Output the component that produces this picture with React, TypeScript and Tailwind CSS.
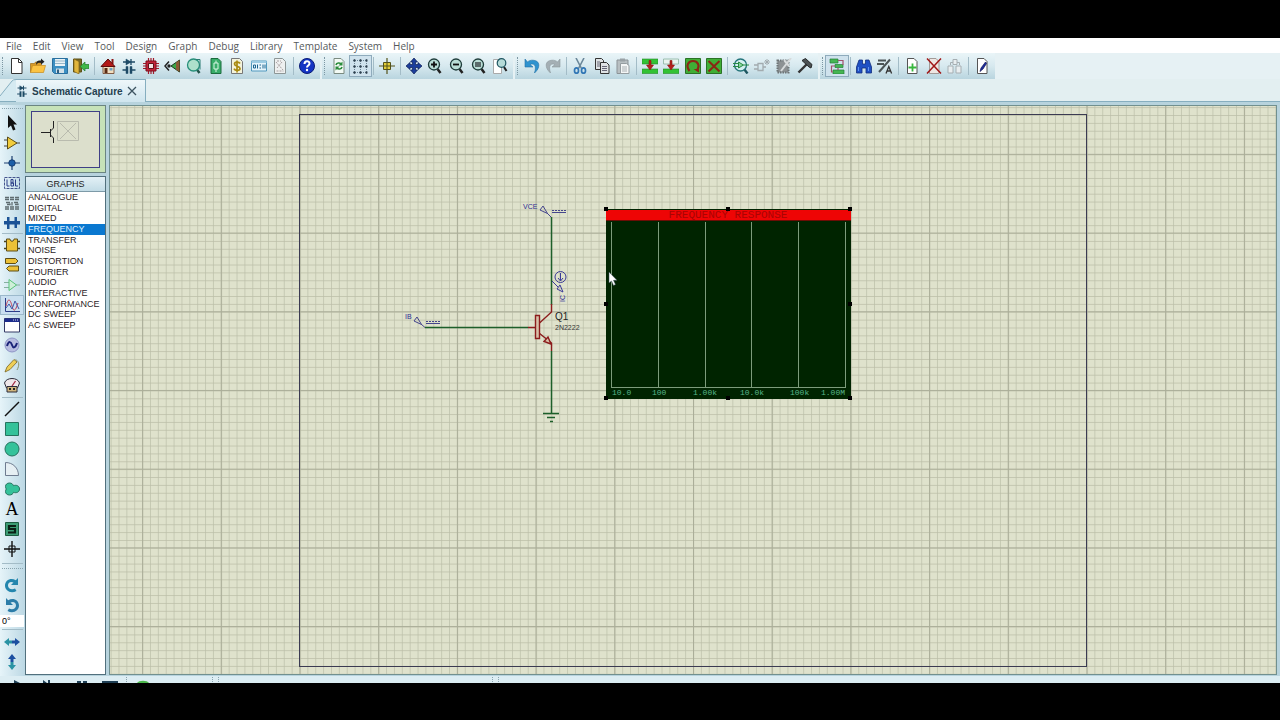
import { useState } from "react";
import type { ReactNode } from "react";

const MENUS = [
  "File",
  "Edit",
  "View",
  "Tool",
  "Design",
  "Graph",
  "Debug",
  "Library",
  "Template",
  "System",
  "Help",
];

const GRAPHS = [
  "ANALOGUE",
  "DIGITAL",
  "MIXED",
  "FREQUENCY",
  "TRANSFER",
  "NOISE",
  "DISTORTION",
  "FOURIER",
  "AUDIO",
  "INTERACTIVE",
  "CONFORMANCE",
  "DC SWEEP",
  "AC SWEEP",
];

const AXIS = [
  { x: 306, label: "10.0" },
  { x: 346, label: "100" },
  { x: 387, label: "1.00k" },
  { x: 434, label: "10.0k" },
  { x: 484, label: "100k" },
  { x: 515, label: "1.00M" },
];

const page = <path d="M3.500 .5h6.500l3 3v12h-9.500z" fill="#fff" stroke="#555" />;
const lens = (
  <>
    <path d="M10.500 11l3 4" stroke="#222" strokeWidth="2.500" />
    <circle cx="7" cy="6.500" r="5.500" fill="#b9ded6" stroke="#1e3c3a" strokeWidth="1.300" />
  </>
);

const ICONS: Record<string, ReactNode> = {
  New: (
    <>
      <path d="M2.500 .5h7l3.500 3.500v11.500H2.500z" fill="#fff" stroke="#333" />
      <path d="M9.500 .5v4H13" fill="none" stroke="#333" />
    </>
  ),
  Open: (
    <>
      <path d="M.5 14.500V5.500h4l1-1.500h6v3" fill="#d89a28" stroke="#a06d18" strokeWidth=".7" />
      <path d="M.5 14.500l2-7h13l-2 7z" fill="#fbc343" stroke="#c58b1c" strokeWidth=".7" />
      <path d="M6 7c0-4 2-5 5-4.500V.5l3.500 3.200-3.500 2.800V5c-2-.5-3.500-.2-5 2z" fill="#222" />
    </>
  ),
  Save: (
    <>
      <path d="M.5 .5h15v15h-13l-2-2z" fill="#3b8fc2" stroke="#2a6f9e" />
      <path d="M3 1h10v7H3z" fill="#e8f2f6" />
      <path d="M3 3h10M3 5.500h10" stroke="#96b6c8" />
      <path d="M4 10.500h8V15H4z" fill="#d2e1e8" />
      <path d="M5 11.500h2V15H5z" fill="#315e80" />
    </>
  ),
  Exit: (
    <>
      <path d="M.5 1h8v13h-8z" fill="#7c6a22" stroke="#5d5019" />
      <path d="M1 1l5 2.500V16l-5-2.500z" fill="#e1b63c" stroke="#7c621a" strokeWidth=".7" />
      <path d="M16 6.500v4h-4V13L7 8.500 12 4v2.500z" fill="#3fb84a" stroke="#207a2b" strokeWidth=".7" />
    </>
  ),
  Home: (
    <>
      <path d="M11.500 1h2v5h-2z" fill="#8c1515" />
      <path d="M3 8h11v7.500H3z" fill="#f3dfc0" stroke="#6a3b22" strokeWidth=".8" />
      <path d="M8 1L1 8.500h14z" fill="#b31919" stroke="#5c0d0d" />
      <path d="M4.500 10h3v5h-3z" fill="#5b2c14" />
      <path d="M9.500 10h3v2.500h-3z" fill="#6aa0c0" />
    </>
  ),
  Schematic: (
    <g stroke="#1e4a66" fill="#1e4a66">
      <path d="M2 4h12M10 1v6M1.500 12H6M10 12h4.500" strokeWidth="1.300" />
      <path d="M5 1l5 3-5 3z" strokeWidth=".5" />
      <path d="M5 8.500v7h2v-7zM9 8.500v7h2v-7z" strokeWidth=".5" />
    </g>
  ),
  "PCB Layout": (
    <>
      <path d="M5.500 0v16M8 0v16M10.500 0v16M0 5.500h16M0 8h16M0 10.500h16" stroke="#a01c2c" strokeWidth="1.200" />
      <path d="M3 3h10v10H3z" fill="#c5233a" stroke="#7d0e1d" />
      <path d="M5.500 5.500h5v5h-5z" fill="#f2e3e4" stroke="#601018" />
    </>
  ),
  "3D Viewer": (
    <>
      <path d="M15.500 2v12L7 8z" fill="#3aa648" stroke="#1c3a20" />
      <path d="M15.500 2v12L12 11.500v-7z" fill="#8b5a36" />
      <path d="M5 3.500L1 8l4 4.500" fill="none" stroke="#222" strokeWidth="1.500" />
      <circle cx="5" cy="8" r="1.700" fill="#222" />
    </>
  ),
  "Gerber Viewer": (
    <>
      <path d="M10.500 11l3 4" stroke="#24564c" strokeWidth="2.500" />
      <circle cx="7.500" cy="7" r="6" fill="#aee0cb" stroke="#278f79" strokeWidth="1.300" />
      <path d="M10 1.500h4v10" fill="none" stroke="#2b7c72" />
    </>
  ),
  "Design Explorer": (
    <>
      <path d="M3 .5h7l3 3v12H3z" fill="#38ad69" stroke="#1b6b3d" />
      <path d="M6 5h4v6H6zM8 2.500V5m0 6v3" fill="none" stroke="#d8f6e4" />
    </>
  ),
  "Bill of Materials": (
    <>
      <path d="M2.500 .5h8l3 3v12h-11z" fill="#f3f3dc" stroke="#777" />
      <path d="M11 5.500C10 3.500 5.500 3.500 5.500 6S11 8 11 10.500s-5 2.500-6 .2M8 2.500v12" fill="none" stroke="#a98a10" strokeWidth="1.700" />
    </>
  ),
  "Source Code": (
    <>
      <path d="M.5 3h15v10H.5z" fill="#e5f4fb" stroke="#5098bd" />
      <path d="M.5 3h15v2H.5z" fill="#9ccbe2" />
      <path d="M2.500 7h2v3h-2zM6.500 6.500v4M8.500 7h1.500M8.500 10h1.500M12 6.500v4M14 6.500v4" fill="none" stroke="#1d658f" />
    </>
  ),
  Notes: (
    <>
      <path d="M2.500 .5h8l3 3v12h-11z" fill="#eef0f0" stroke="#8d9696" />
      <path d="M4 4l7 8M10 4l-5 6M4.500 13h7M5 3h4" stroke="#a9a0a2" strokeDasharray="2 1" />
    </>
  ),
  Help: (
    <>
      <circle cx="8" cy="8" r="7.500" fill="#1434c4" stroke="#0b1c75" />
      <path d="M5.500 6c0-3.500 5-3.500 5-.5 0 2-2.500 2-2.500 4" fill="none" stroke="#fff" strokeWidth="2" />
      <circle cx="8" cy="12" r="1.200" fill="#fff" />
    </>
  ),
  Redraw: (
    <>
      <path d="M3 .5h7l3 3v12H3z" fill="#f3faf5" stroke="#7a8a80" />
      <path d="M5 7c.5-2.500 4-2.500 5-1M11 9c-.5 2.500-4 2.500-5 1" fill="none" stroke="#2a8c3c" strokeWidth="1.600" />
      <path d="M11.500 3.500v4h-4zM4.500 12.500v-4h4z" fill="#2a8c3c" />
    </>
  ),
  Grid: (
    <>
      <path d="M1 2.500h14M1 8.500h14M1 14.500h14M2.500 1v15M8.500 1v15M14.500 1v15" stroke="#6c8494" strokeDasharray="1 1" />
      <path
        d="M1.500 1.500h2v2h-2zM7.500 1.500h2v2h-2zM13.500 1.500h2v2h-2zM1.500 7.500h2v2h-2zM7.500 7.500h2v2h-2zM13.500 7.500h2v2h-2zM1.500 13.500h2v2h-2zM7.500 13.500h2v2h-2zM13.500 13.500h2v2h-2z"
        fill="#2e3f4c"
      />
    </>
  ),
  Origin: (
    <>
      <path d="M0 8h16M8 0v16" stroke="#54521a" strokeWidth="1.200" />
      <path d="M4.500 4.500h7v7h-7z" fill="#e4cf3a" stroke="#54521a" />
      <path d="M4.500 8h7M8 4.500v7" stroke="#54521a" />
    </>
  ),
  Pan: (
    <path
      d="M8 0l3.500 4H9.500v2.500H12V4.500L16 8l-4 3.500v-2H9.500V12h2L8 16l-3.500-4h2V9.500H4v2L0 8l4-3.500v2h2.500V4h-2z"
      fill="#1c3f9c"
      stroke="#0e2054"
      strokeWidth=".7"
    />
  ),
  "Zoom In": (
    <>
      {lens}
      <path d="M4 6.500h6M7 3.500v6" stroke="#111" strokeWidth="1.800" />
    </>
  ),
  "Zoom Out": (
    <>
      {lens}
      <path d="M4 6.500h6" stroke="#111" strokeWidth="1.800" />
    </>
  ),
  "Zoom All": (
    <>
      {lens}
      <path d="M4 4h6v5H4z" fill="#5b6b6b" />
    </>
  ),
  "Zoom Area": (
    <>
      <path d="M1.500 1.500h8v14h-8z" fill="#fff" stroke="#aaa" />
      <path d="M12 9l2.500 4" stroke="#222" strokeWidth="2" />
      <circle cx="9.500" cy="5" r="4.300" fill="#b5dbd8" stroke="#1f5560" strokeWidth="1.200" />
    </>
  ),
  Undo: (
    <path d="M1 1v8h8L6 6.500c4-1.500 7 .5 4.500 8.500C16.500 10 16.500 2.500 9 2.200 6.500 2 4.500 3 3.500 4z" fill="#2f93cf" stroke="#2170a6" strokeWidth=".6" />
  ),
  Redo: (
    <path d="M15 1v8H7l3-2.500C6 5 3 7 5.500 15-.5 10-.5 2.500 7 2.200 9.500 2 11.500 3 12.500 4z" fill="#a4afb4" stroke="#8b979c" strokeWidth=".6" />
  ),
  Cut: (
    <>
      <path d="M4 0l5.500 10.500M12 0L6.500 10.500" stroke="#6b8799" strokeWidth="1.600" />
      <ellipse cx="4.500" cy="12.500" rx="2" ry="2.700" fill="none" stroke="#3176b5" strokeWidth="1.700" />
      <ellipse cx="11.500" cy="12.500" rx="2" ry="2.700" fill="none" stroke="#3176b5" strokeWidth="1.700" />
    </>
  ),
  Copy: (
    <g fill="#dfe3e5" stroke="#333">
      <path d="M1.500 .5h6l2 2v9h-8z" />
      <path d="M6.500 4.500h6l2.500 2.500v8.500H6.500z" />
      <path d="M3 4h3M3 6h3M3 8h3M8 8.500h5M8 10.500h5M8 12.500h5" stroke="#667" />
    </g>
  ),
  Paste: (
    <>
      <path d="M2 2h11v13.500H2z" fill="#b8bfc2" stroke="#8b9397" />
      <path d="M5 .5h5v3H5z" fill="#9aa2a6" />
      <path d="M5.500 5.500h6l2.500 2v8H5.500z" fill="#f4f6f6" stroke="#959da0" />
      <path d="M7 9h5M7 11h5M7 13h5" stroke="#a9b0b3" />
    </>
  ),
  "Block Copy": (
    <>
      <path d="M0 1h16v5H0zM0 11h16v4.500H0z" fill="#32c234" stroke="#278a2a" strokeWidth=".6" />
      <path d="M7 2.500h2V7h2.500L8 12 4.500 7H7z" fill="#b3201c" stroke="#8c1613" strokeWidth=".6" />
    </>
  ),
  "Block Move": (
    <>
      <path d="M.5 1h15v5H.5z" fill="#e8f4f0" stroke="#8cb3a0" strokeWidth=".8" />
      <path d="M0 11h16v4.500H0z" fill="#32c234" stroke="#278a2a" strokeWidth=".6" />
      <path d="M7 2.500h2V7h2.500L8 12 4.500 7H7z" fill="#b3201c" stroke="#8c1613" strokeWidth=".6" />
    </>
  ),
  "Block Rotate": (
    <>
      <path d="M.5 .5h15v15H.5z" fill="#3fae35" stroke="#2a7326" />
      <path d="M4.500 13C0 7 4 3 8 3s8 4 3.500 10" fill="none" stroke="#8a2615" strokeWidth="2.200" />
      <path d="M8.500 11h5.500v3.500z" fill="#8a2615" />
    </>
  ),
  "Block Delete": (
    <>
      <path d="M.5 .5h15v15H.5z" fill="#3fae35" stroke="#2a7326" />
      <path d="M2.500 3l11 10.500M13.500 3l-11 10.500" stroke="#8a2615" strokeWidth="2" />
    </>
  ),
  "Pick Parts": (
    <>
      <path d="M11 11l3.500 4.500" stroke="#1d5660" strokeWidth="2.400" />
      <circle cx="7.500" cy="7" r="6" fill="#d3eff0" stroke="#24747a" strokeWidth="1.300" />
      <path d="M5.500 4l5 3-5 3zM0 5.500h5M0 8.500h5M10.500 7H16" fill="#89d69c" stroke="#278a44" />
    </>
  ),
  "Make Device": (
    <g fill="none" stroke="#a2abaf">
      <path d="M0 7h4M0 11h4M4 5.500h5v7H4zM9 9h3" strokeWidth="1.300" />
      <path d="M13 1v6M10 4h6M11 2l4 4M15 2l-4 4" />
    </g>
  ),
  Packaging: (
    <>
      <path d="M1.500 2.500h11v12h-11z" fill="#8d9294" stroke="#6e7577" strokeDasharray="1.500 1" strokeWidth="2" />
      <path d="M15 0L5 13M8 2l5 6" stroke="#d7dbdc" strokeWidth="2" />
    </>
  ),
  Decompose: (
    <>
      <path d="M10 6L1.500 14.500" stroke="#333" strokeWidth="2.400" />
      <path d="M5 2.500L8.500 .5l6.500 6-1 3.500-2-1z" fill="#4b5052" stroke="#26292a" />
    </>
  ),
  "Wire Autorouter": (
    <>
      <path d="M1 1h8v4H1zM6 6.500h8v3H6zM4 12h11v4H4z" fill="#45b552" stroke="#23803b" strokeWidth=".7" />
      <path d="M9 2.500h5v4.500M6 8H2.500v6H4M9 10v2" fill="none" stroke="#a1526c" strokeWidth="1.200" />
    </>
  ),
  Search: (
    <>
      <path d="M3 2h3.500v4h3V2H13l2.500 7v6H10v-5H6v5H.5V9z" fill="#1f50c4" stroke="#132f7c" strokeWidth=".8" />
      <path d="M2.500 9v4M12.500 9v4" stroke="#5f92ee" />
    </>
  ),
  "Property Assign": (
    <>
      <path d="M1 2.500h8M0 6h7M2 14L13 1.500" stroke="#4d5557" strokeWidth="2" />
      <path d="M9 15.500l2.800-7 2.800 7M10 13h3.500" fill="none" stroke="#333" strokeWidth="1.300" />
    </>
  ),
  "New Sheet": (
    <>
      {page}
      <path d="M8.500 5.500v8M4.500 9.500h8" stroke="#38b73e" strokeWidth="1.800" />
    </>
  ),
  "Delete Sheet": (
    <>
      <path d="M3.500 .5h6.500l3 3v12h-9.500z" fill="#eee6e2" stroke="#a39a97" />
      <path d="M1 .5l14 15M15 .5l-14 15" stroke="#a01818" strokeWidth="1.500" />
    </>
  ),
  "Parent Sheet": (
    <g fill="#e9eef0" stroke="#a6aeb2">
      <path d="M3.500 7V4.500H6M10 4.500h2.500V7" fill="none" />
      <path d="M1 8h5v7H1zM9 8h5v7H9zM6 1.500h4v5H6z" />
    </g>
  ),
  "Electrical Report": (
    <>
      {page}
      <path d="M11.500 4L7 10l-1 3.500L9 11l3.500-5.500z" fill="#1c2c9c" stroke="#14195a" strokeWidth=".7" />
    </>
  ),
};

const TOOLS: Record<string, ReactNode> = {
  Selection: <path d="M4 0v13l3-2.500 2 5 2.500-1-2-5H13z" fill="#111" />,
  Component: (
    <>
      <path d="M0 5h4M0 11h4M12 8h4" stroke="#444" />
      <path d="M3.500 2v12l9.500-6z" fill="#f1cc3c" stroke="#5d4e16" />
    </>
  ),
  Junction: (
    <>
      <path d="M0 8h16M8 1v14" stroke="#1c3f70" strokeWidth="1.200" />
      <circle cx="8" cy="8" r="3.200" fill="#1c5fa8" stroke="#163d70" />
    </>
  ),
  "Wire Label": (
    <>
      <path d="M.5 2.500h15v11H.5z" fill="none" stroke="#45558d" strokeDasharray="3 1" />
      <path d="M3 4.500v6.500h2.500M7 4.500v6.500h2.500V8H7h2V4.500zM11.500 4.500v6.500H14" fill="none" stroke="#2c3e88" />
    </>
  ),
  "Text Script": (
    <path d="M1 2.500h14M1 4.500h14M1 12h14M1 14h14M2 7.500h4v2H2M8 7v3.500M10 7.500h4v2h-4" fill="none" stroke="#5f6c70" strokeDasharray="4 1" strokeWidth="1.300" />
  ),
  Bus: <path d="M0 6h3V2h2.500v4h5V2H13v4h3v3.500h-3V13h-2.500V9.500h-5V14H3V9.500H0z" fill="#1c5396" />,
  Subcircuit: (
    <>
      <path d="M0 4.500h16M0 11.500h16" stroke="#4b431a" strokeWidth="1.500" />
      <path d="M2.500 2h3.500c0 3 4 3 4 0h3.500v12H2.500z" fill="#ecc137" stroke="#5c4e18" />
    </>
  ),
  Terminal: (
    <g fill="#ecc137" stroke="#5c4e18">
      <path d="M1.500 1.500h10l2.500 2.500-2.500 2.500h-10zM5 9h9.500v5H5L2.500 11.500z" />
    </g>
  ),
  "Device Pin": (
    <>
      <path d="M0 5.500h5M0 10.500h5M12 8h4" stroke="#86b0a0" />
      <path d="M5 2.500v11L12.500 8z" fill="#ceefd8" stroke="#58c47a" />
    </>
  ),
  Graph: (
    <>
      <path d="M1.500 1v13.500H16" fill="none" stroke="#2c3e88" />
      <path d="M2 9c2-8 4-8 6 0s4 3 6-3" fill="none" stroke="#c43a50" />
      <path d="M2 11l3-4 3 5 3-8 4 8" fill="none" stroke="#3f56a8" />
    </>
  ),
  "Active Popup": (
    <>
      <path d="M.5 1.500h15v13.500H.5z" fill="#fff" stroke="#333a66" />
      <path d="M.5 1.500h15v3.500H.5z" fill="#1c2c8c" />
      <path d="M9 3h1M11 3h1M13 3h1" stroke="#dde" />
    </>
  ),
  Generator: (
    <>
      <circle cx="8" cy="8" r="7" fill="#b8bde0" stroke="#8e95c6" />
      <path d="M3 9c2-6 4-4 5-1s3 4 5-2" fill="none" stroke="#1a2378" strokeWidth="2" />
    </>
  ),
  Probe: (
    <>
      <path d="M1 15l2-5 7-7.500 3 2.500-7 7.500z" fill="#efcf56" stroke="#7a6420" strokeWidth=".8" />
      <path d="M11.500 2.500c4 2 4 6 1.500 10.500" fill="none" stroke="#87936c" />
    </>
  ),
  Instrument: (
    <>
      <path d="M.5 6C2 0 14 0 15.500 6l-2 5h-11z" fill="#eee7ea" stroke="#2c2c3a" />
      <path d="M8 9l3.500-5" stroke="#a12a42" strokeWidth="1.300" />
      <path d="M3 9.500h10v5.500H3z" fill="#d0b57c" stroke="#2c2c3a" />
      <path d="M5 12h2M9 12h2" stroke="#222" strokeWidth="2" />
    </>
  ),
  Line: <path d="M1 15L15 1" stroke="#111" strokeWidth="1.500" />,
  Box: <path d="M1.500 1.500h13v13h-13z" fill="#35c29a" stroke="#26735e" />,
  Circle: <circle cx="8" cy="8" r="7" fill="#35c29a" stroke="#26735e" />,
  Arc: <path d="M1.500 1.500C9 1.500 14.500 7 14.500 14.500h-13z" fill="#e6eff3" stroke="#6f7c90" />,
  Path: (
    <path d="M5.500 2c2.500 0 3.500 1.500 4 2.700C12.500 3.500 15.500 5 15.500 8s-3 4.500-6 3.300C9 13 7.500 14 5.500 14 3 14 1.500 12.500 1.500 10.500c0-1 .3-1.700.8-2.500-.5-.7-.8-1.500-.8-2.500C1.500 3.500 3 2 5.500 2z" fill="#35c29a" stroke="#26735e" />
  ),
  Symbol: (
    <>
      <path d="M1.500 1.500h13v13h-13z" fill="#3c9c74" stroke="#1c5c40" />
      <path d="M12 5H5v3h6v3.500H4" fill="none" stroke="#0a2015" strokeWidth="2.200" />
    </>
  ),
  Marker: (
    <g fill="none" stroke="#111">
      <path d="M0 8h16M8 0v16" strokeWidth="1.400" />
      <path d="M5 5h6v6H5z" />
    </g>
  ),
  "Rotate Clockwise": (
    <path d="M14 1v7H7l2.500-2.500c-3-1.500-5.500 0-5.500 3s3.500 5 7 3L12.500 14C7 17 1 14 1 8.500S7 0 11.800 3.200z" fill="#2386ae" />
  ),
  "Rotate Anticlockwise": (
    <path d="M2 1v7h7L6.500 5.500c3-1.500 5.500 0 5.500 3s-3.500 5-7 3L3.500 14C9 17 15 14 15 8.500S9 0 4.200 3.200z" fill="#2b7ca8" />
  ),
  "Mirror X": (
    <>
      <path d="M0 8l5-4v2.500h3v3H5V12z" fill="#2a93a4" />
      <path d="M16 8l-5-4v2.500H8v3h3V12z" fill="#1c4fa0" />
    </>
  ),
  "Mirror Y": (
    <>
      <path d="M8 0L4 5h2.500v3h3V5H12z" fill="#1c4fa0" />
      <path d="M8 16l-4-5h2.500V8h3v3H12z" fill="#2a93a4" />
    </>
  ),
};

function Icon({ children }: { children: ReactNode }) {
  return (
    <svg viewBox="0 0 16 16" className="h-4 w-4 shrink-0" aria-hidden="true">
      {children}
    </svg>
  );
}

function Group({ names, width, pressed }: { names: string[]; width: string; pressed?: string }) {
  return (
    <div className={`flex h-full items-center ${width}`}>
      {names.map((name) => (
        <button
          key={name}
          type="button"
          aria-label={name}
          className={`flex h-5 min-w-0 flex-1 items-center justify-center ${
            name === pressed ? "bg-[#cfe2ed] outline outline-[#8fabbc]" : ""
          }`}
        >
          <Icon>{ICONS[name]}</Icon>
        </button>
      ))}
    </div>
  );
}

function Sep() {
  return (
    <div className="flex w-[5px] shrink-0 justify-center">
      <div className="my-1 w-px bg-[#a3bcc7]" />
    </div>
  );
}

function Bar({ children }: { children: ReactNode }) {
  return (
    <div className="relative flex items-stretch bg-gradient-to-b from-[#eaf5f8] via-[#d7e9ef] to-[#b9d5df] pr-0.5 pl-[6px]">
      <div className="absolute inset-y-1 left-0.5 border-l border-dotted border-[#7c96a2]" />
      {children}
    </div>
  );
}

function ToolButtons({ names, active, onPick }: { names: string[]; active?: string; onPick?: (n: string) => void }) {
  return (
    <>
      {names.map((name) => (
        <button
          key={name}
          type="button"
          aria-label={name}
          onClick={() => onPick?.(name)}
          className={`flex h-5 w-6 shrink-0 items-center justify-center ${
            name === active ? "border border-[#9cb9cc] bg-[#c9dff0]" : ""
          }`}
        >
          {name === "Text" ? (
            <span className="font-['Liberation_Serif',serif] text-[18px] leading-5 text-black">A</span>
          ) : (
            <Icon>{TOOLS[name]}</Icon>
          )}
        </button>
      ))}
    </>
  );
}

function FrequencyGraph() {
  return (
    <g>
      <rect x="307" y="94" width="245" height="190" fill="#002400" />
      <rect x="307" y="95" width="245" height="10" fill="#ee0505" />
      <path d="M307 105.500h245" stroke="#6b0d05" />
      <text x="429" y="103" textAnchor="middle" fill="#a80404" className="font-['Liberation_Mono',monospace] text-[11px]">
        FREQUENCY RESPONSE
      </text>
      <path
        d="M312.500 107v166M359.500 107v166M406.500 107v166M452.500 107v166M499.500 107v166M546.500 107v166M312 272.500h235"
        stroke="#7d9c7b"
      />
      {AXIS.map((a) => (
        <text
          key={a.label}
          x={a.x + 7}
          y="280"
          fill="#58b58c"
          className="font-['Liberation_Mono',monospace] text-[8px]"
        >
          {a.label}
        </text>
      ))}
      {/* resize handles */}
      {[307, 429, 551].map((x) =>
        [94, 189, 283].map((y) =>
          x === 429 && y === 189 ? null : (
            <rect key={`${x}-${y}`} x={x - 2} y={y - 2} width="4" height="4" fill="#000" />
          ),
        ),
      )}
    </g>
  );
}

function Circuit() {
  return (
    <g fill="none" className="font-['Liberation_Sans',sans-serif]">
      <path d="M252.500 102v88M252.500 236v62M126 212.500h103" stroke="#1d5f2a" strokeWidth="1.500" />
      <path d="M244 298.500h16M248 302.500h8M251 306.500h3" stroke="#1d5f2a" strokeWidth="1.300" />

      {/* transistor */}
      <g stroke="#8c1c1c" strokeWidth="1.400">
        <path d="M252.500 189v8l-12 11M240 218l12.500 10v8M229 212.500h7" />
        <path d="M236.500 200.500h4v23h-4z" fill="#d8c0a8" />
        <path d="M252 229l-7-2.500 4-4.500z" fill="#d8c0a8" />
      </g>
      <text x="256" y="205" fill="#222" className="text-[10px]">
        Q1
      </text>
      <text x="256" y="215" fill="#333" className="text-[7px]">
        2N2222
      </text>

      {/* generators */}
      <g stroke="#45458c">
        <path d="M241 95l3-4 4.500 7.500zM248 98l4 4M115 206l3-4 4.500 7.500zM122 209l4 3.500" />
        <path d="M253 97.500h14M127 208.500h14" />
        <path d="M253 95.500h14M127 206.500h14" strokeDasharray="2 1" />
      </g>
      <text x="224" y="94" fill="#2d2d92" className="text-[7px]">
        VCE
      </text>
      <text x="106" y="204" fill="#2d2d92" className="text-[7px]">
        IB
      </text>

      {/* current probe */}
      <g stroke="#3a3a98">
        <circle cx="261.500" cy="162" r="5.500" />
        <path d="M261.500 158v7.500M259 163l2.500 3 2.500-3M253 166l6 6M258 174l3-4 3 7z" />
      </g>
      <text transform="translate(266 187) rotate(-90)" fill="#2d2d92" className="text-[7px]">
        IC
      </text>
    </g>
  );
}

function Sheet() {
  return (
    <svg className="absolute inset-0 h-full w-full" role="img" aria-label="Schematic sheet">
      <defs>
        <pattern id="minor" width="7.870" height="7.870" patternUnits="userSpaceOnUse" patternTransform="translate(189.500 9)">
          <path d="M0 0H7.870M0 0V7.870" stroke="#bbbea8" strokeWidth="1.400" />
        </pattern>
        <pattern id="major" width="78.700" height="78.700" patternUnits="userSpaceOnUse" patternTransform="translate(189.500 9)">
          <path d="M.5 0V78.700M0 39.350H78.700" stroke="#abae99" strokeWidth="1.200" />
        </pattern>
      </defs>
      <rect width="100%" height="100%" fill="url(#minor)" />
      <rect width="100%" height="100%" fill="url(#major)" />
      <g transform="translate(189 9)">
        <rect x=".5" y="-.5" width="787" height="552" fill="none" stroke="#3b3b52" />
        <Circuit />
        <FrequencyGraph />
        <path d="M310 157v11l2.500-2 2 4.500 2-1-2-4.200h3.500z" fill="#fff" stroke="#345" strokeWidth=".5" />
      </g>
    </svg>
  );
}

export default function App() {
  const [graph, setGraph] = useState("FREQUENCY");
  const [mode, setMode] = useState("Graph");
  const [angle, setAngle] = useState("0°");

  return (
    <div className="flex h-screen flex-col overflow-hidden bg-black pt-[38px] pb-[37px] font-['Liberation_Sans',sans-serif] text-black">
      <nav className="flex h-[15px] shrink-0 items-center gap-px bg-white pl-px font-['Open_Sans',sans-serif]">
        {MENUS.map((m) => (
          <button key={m} type="button" className="px-[5px] text-[10px] leading-4 text-[#55595c]">
            {m}
          </button>
        ))}
      </nav>

      <div className="flex h-[26px] shrink-0 items-stretch gap-0.5 bg-[#e6f1f4]">
        <Bar>
          <Group names={["New", "Open", "Save", "Exit"]} width="w-[86px]" />
          <Sep />
          <Group
            names={[
              "Home",
              "Schematic",
              "PCB Layout",
              "3D Viewer",
              "Gerber Viewer",
              "Design Explorer",
              "Bill of Materials",
              "Source Code",
              "Notes",
            ]}
            width="w-[194px]"
          />
          <Sep />
          <Group names={["Help"]} width="w-[22px]" />
        </Bar>
        <Bar>
          <Group names={["Redraw", "Grid"]} width="w-[43px]" pressed="Grid" />
          <Sep />
          <Group names={["Origin"]} width="w-[22px]" />
          <Sep />
          <Group names={["Pan", "Zoom In", "Zoom Out", "Zoom All", "Zoom Area"]} width="w-[108px]" />
        </Bar>
        <Bar>
          <Group names={["Undo", "Redo"]} width="w-[43px]" />
          <Sep />
          <Group names={["Cut", "Copy", "Paste"]} width="w-[65px]" />
          <Sep />
          <Group names={["Block Copy", "Block Move", "Block Rotate", "Block Delete"]} width="w-[86px]" />
          <Sep />
          <Group names={["Pick Parts", "Make Device", "Packaging", "Decompose"]} width="w-[86px]" />
        </Bar>
        <Bar>
          <Group names={["Wire Autorouter"]} width="w-[22px]" pressed="Wire Autorouter" />
          <Sep />
          <Group names={["Search", "Property Assign"]} width="w-[43px]" />
          <Sep />
          <Group names={["New Sheet", "Delete Sheet", "Parent Sheet"]} width="w-[65px]" />
          <Sep />
          <Group names={["Electrical Report"]} width="w-[22px]" />
        </Bar>
      </div>

      {/* document tabs */}
      <div className="flex h-[23px] shrink-0 items-end border-b border-[#86aebf] bg-[#e3eff1]">
        <svg viewBox="0 0 16 22" className="h-[22px] w-4 shrink-0" aria-hidden="true">
          <path d="M0 17L12 2q1-1.500 4-1.500V22H0z" fill="#d5eaf1" />
          <path d="M0 17L12 2q1-1.500 4-1.500" fill="none" stroke="#86aebf" />
        </svg>
        <div className="-mb-px flex h-[23px] items-center border-t border-r border-[#86aebf] bg-gradient-to-b from-[#eef7fa] to-[#cfe5ee] pr-2">
          <svg viewBox="0 0 16 16" className="h-3 w-3" aria-hidden="true">
            {ICONS.Schematic}
          </svg>
          <span className="ml-1 text-[10px] font-bold text-[#24404f]">Schematic Capture</span>
          <button type="button" aria-label="Close tab" className="ml-1">
            <svg viewBox="0 0 10 10" className="h-2.5 w-2.5">
              <path d="M1 1l8 8M9 1L1 9" stroke="#3c5360" strokeWidth="1.300" />
            </svg>
          </button>
        </div>
      </div>

      <div className="flex min-h-0 flex-1 bg-[#b7d3dd] pt-[3px] pr-[3px]">
        <aside className="flex w-[25px] shrink-0 flex-col bg-gradient-to-r from-[#e6f4f9] to-[#bcd8e4]">
          <div className="mx-0.5 mt-[3px] mb-1 border-t border-dotted border-[#8aa4af]" />
          <ToolButtons
            names={["Selection", "Component", "Junction", "Wire Label", "Text Script", "Bus"]}
            active={mode}
            onPick={setMode}
          />
          <div className="mx-0.5 mb-px border-t border-[#a3bcc7]" />
          <ToolButtons
            names={["Subcircuit", "Terminal", "Device Pin", "Graph", "Active Popup", "Generator", "Probe", "Instrument"]}
            active={mode}
            onPick={setMode}
          />
          <div className="mx-0.5 mt-0.5 mb-px border-t border-[#a3bcc7]" />
          <ToolButtons
            names={["Line", "Box", "Circle", "Arc", "Path", "Text", "Symbol", "Marker"]}
            active={mode}
            onPick={setMode}
          />
          <div className="mx-0.5 mt-1 mb-1 border-t border-[#a3bcc7]" />
          <div className="mx-0.5 mb-1.5 border-t border-dotted border-[#8aa4af]" />
          <ToolButtons names={["Rotate Clockwise", "Rotate Anticlockwise"]} />
          <input
            aria-label="Rotation angle"
            value={angle}
            onChange={(e) => setAngle(e.target.value)}
            className="h-3 w-6 shrink-0 bg-white pl-0.5 text-[9px] leading-3 outline-none"
          />
          <div className="mx-0.5 mt-0.5 mb-0.5 border-t border-[#a3bcc7]" />
          <ToolButtons names={["Mirror X", "Mirror Y"]} />
        </aside>

        <div className="mb-2 flex w-[81px] shrink-0 flex-col gap-[3px]">
          <div className="h-[68px] shrink-0 border border-[#6b8581] bg-[#c6e2b8] p-1 pt-[5px]">
            <div className="mx-px h-[57px] border border-[#3f3f86] bg-[#dcdfcc]">
              <svg className="h-full w-full" aria-hidden="true">
                <path d="M9 20.500h9M21.500 9v7l-3 3v4l3 3v5M18.500 17v8" fill="none" stroke="#222" />
                <path d="M25.500 9.500h21v19h-21zM28 11l16 16M44 11L28 27" fill="none" stroke="#b9bbae" />
              </svg>
            </div>
          </div>
          <div className="flex min-h-0 flex-1 flex-col border border-[#52707d] bg-white">
            <h2 className="h-[15px] shrink-0 border-b border-[#7d9aa8] bg-gradient-to-b from-[#e3f1f6] to-[#c2dce6] text-center text-[9px] leading-[15px] text-[#222]">
              GRAPHS
            </h2>
            <ul className="flex h-[139px] shrink-0 flex-col">
              {GRAPHS.map((g) => (
                <li key={g} className="flex flex-1">
                  <button
                    type="button"
                    onClick={() => setGraph(g)}
                    className={`flex w-full items-center pl-0.5 text-[9px] leading-none ${
                      g === graph ? "bg-[#0a78d0] text-[#dff1ff]" : "text-[#2c2426]"
                    }`}
                  >
                    {g}
                  </button>
                </li>
              ))}
            </ul>
          </div>
        </div>

        <main className="relative mb-2 ml-[3px] min-w-0 flex-1 overflow-hidden border border-[#71908f] bg-[#dfe2cc]">
          <Sheet />
        </main>
      </div>

      {/* simulation controls, cut off by the bottom edge */}
      <div className="-mt-[7px] h-[7px] shrink-0 overflow-hidden bg-[#dcedf3] pl-3">
        <svg className="h-[7px] w-[500px]" aria-hidden="true">
          <path d="M2 4v3h6zM31 4v3h4zM36 4h2v3h-2zM65 5h4v2h-4zM71 5h4v2h-4zM90 5h16v2H90z" fill="#1f3f55" />
          <path d="M125 7c2-3 10-3 12 0z" fill="#4cb84c" />
          <path d="M114.500 1v6M200.500 1v6M206.500 1v6M480.500 1v6M486.500 1v6" stroke="#8aa4af" strokeDasharray="1 1" />
        </svg>
      </div>
    </div>
  );
}
